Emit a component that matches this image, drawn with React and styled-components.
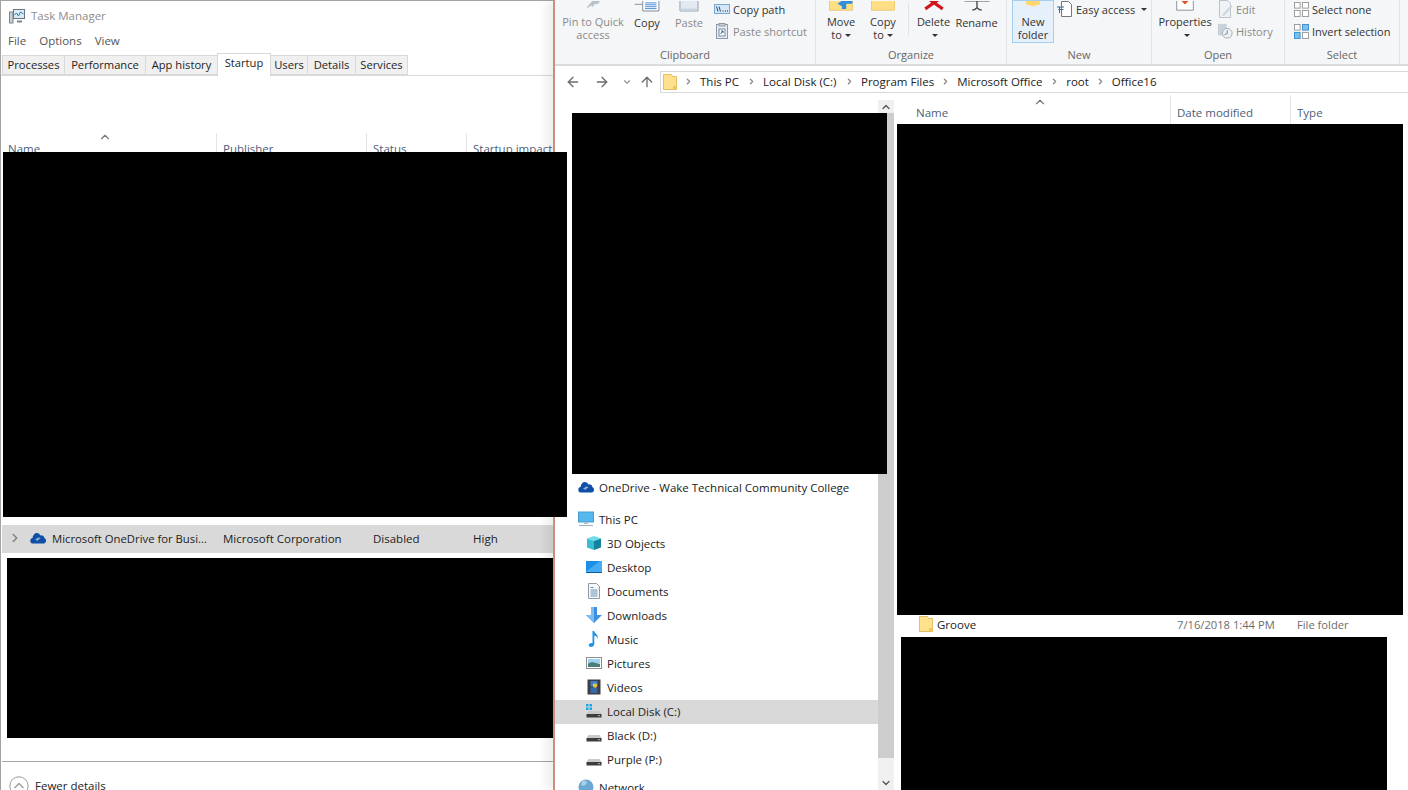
import React from 'react';
import styled, { createGlobalStyle } from 'styled-components';
import { ArrowLeft, ArrowRight, ArrowUp, ChevronDown, ChevronRight, ChevronUp } from 'lucide-react';

const GlobalStyle = createGlobalStyle`
  html, body { margin: 0; padding: 0; height: 100%; overflow: hidden; background: #fff; }
  body { font-family: "Open Sans", "Noto Sans", sans-serif; font-size: 11.5px; color: #1e1e1e; }
  * { box-sizing: border-box; }
`;

const Desktop = styled.div`
  position: relative;
  display: flex;
  width: 1408px;
  height: 790px;
  overflow: hidden;
`;

const Redaction = styled.div`
  position: absolute;
  z-index: 5;
  left: ${(p) => p.$x}px;
  top: ${(p) => p.$y}px;
  width: ${(p) => p.$w}px;
  height: ${(p) => p.$h}px;
  background: #000;
`;

/* task manager */
const TaskWindow = styled.div`
  flex: 0 0 553px;
  display: flex;
  flex-direction: column;
  height: 790px;
  border-top: 1px solid #a3a3a3;
  border-left: 1px solid #a3a3a3;
  background: #fff;
`;

const TitleBar = styled.div`
  flex: 0 0 29px;
  display: flex;
  align-items: center;
  gap: 6px;
  padding-left: 8px;
  color: #8d8d8d;
`;

const MenuBar = styled.div`
  flex: 0 0 23px;
  display: flex;
  align-items: center;
  gap: 13px;
  padding-left: 7px;
  padding-bottom: 3px;
  color: #555;
`;

const TabStrip = styled.div`
  flex: 0 0 23px;
  display: flex;
  align-items: flex-end;
  padding-left: 2px;
  font-size: 11.2px;
  border-bottom: 1px solid #d9d9d9;
`;

const Tab = styled.div`
  flex: 0 0 ${(p) => p.$w}px;
  height: ${(p) => (p.$active ? 23 : 20)}px;
  margin-bottom: ${(p) => (p.$active ? -1 : 0)}px;
  margin-left: -1px;
  display: flex;
  align-items: center;
  justify-content: center;
  padding-bottom: ${(p) => (p.$active ? 5 : 1)}px;
  background: ${(p) => (p.$active ? '#fff' : '#f0f0f0')};
  border: 1px solid #d9d9d9;
  border-bottom: ${(p) => (p.$active ? 'none' : '1px solid #d9d9d9')};
  color: #1e1e1e;
`;

const TaskBody = styled.div`
  flex: 0 0 685px;
  padding-top: 57px;
`;

const TaskHeader = styled.div`
  position: relative;
  display: grid;
  grid-template-columns: 215px 150px 100px 1fr;
  height: 30px;
  color: #4c607a;
`;

const TaskHeaderCell = styled.div`
  padding: 8px 0 0 ${(p) => (p.$first ? 7 : 6)}px;
  border-left: ${(p) => (p.$first ? 'none' : '1px solid #e5e5e5')};
`;

const SortCaret = styled.span`
  position: absolute;
  left: ${(p) => p.$x}px;
  top: ${(p) => p.$y}px;
  color: #777;
  display: flex;
`;

const TaskRow = styled.div`
  display: grid;
  grid-template-columns: 215px 150px 100px 1fr;
  align-items: center;
  height: 28px;
  margin: 362px 0 0 1px;
  padding-bottom: 2px;
  background: #d9d9d9;
`;

const TaskName = styled.div`
  display: flex;
  align-items: center;
  padding-left: 6px;
  color: #222;
  white-space: nowrap;
`;

const TaskNameText = styled.span`
  margin-left: 6px;
  font-size: 11.3px;
`;

const TaskCell = styled.div`
  padding-left: 6px;
  color: #222;
`;

const TaskFooter = styled.div`
  flex: 0 0 60px;
  display: flex;
  align-items: flex-start;
  gap: 6px;
  margin-left: 1px;
  padding: 14px 0 0 7px;
  border-top: 1px solid #a5a5a5;
  color: #222;
`;

const FooterText = styled.span`
  line-height: 20px;
`;

/* explorer */
const ExplorerWindow = styled.div`
  position: relative;
  z-index: 2;
  flex: 1;
  display: flex;
  flex-direction: column;
  height: 790px;
  border-left: 2px solid #cc8f7e;
  background: #fff;
  box-shadow: -7px 0 9px rgba(0, 0, 0, 0.07);
`;

const Ribbon = styled.div`
  flex: 0 0 66px;
  display: flex;
  overflow: hidden;
  font-size: 11px;
  background: #f5f6f7;
  border-bottom: 2px solid #dadbdc;
`;

const RibbonGroup = styled.div`
  flex: 0 0 ${(p) => p.$w}px;
  display: flex;
  flex-direction: column;
  border-right: 1px solid #e2e3e4;
`;

const GroupTools = styled.div`
  flex: 0 0 48px;
  display: flex;
  align-items: flex-start;
  padding-left: ${(p) => p.$pad || 0}px;
`;

const GroupLabel = styled.div`
  text-align: center;
  line-height: 14px;
  color: #666;
`;

const LargeButton = styled.div`
  flex: 0 0 ${(p) => p.$w}px;
  min-width: 0;
  height: 43px;
  margin-left: ${(p) => p.$ml || 0}px;
  display: flex;
  flex-direction: column;
  align-items: center;
  justify-content: flex-end;
  border: 1px solid ${(p) => (p.$active ? '#a4cdee' : 'transparent')};
  background: ${(p) => (p.$active ? '#e6f0fa' : 'transparent')};
  color: ${(p) => (p.$muted ? '#8a8a8a' : '#333')};
`;

const ButtonLabel = styled.div`
  height: 26px;
  margin-bottom: 1px;
  line-height: 13px;
  text-align: center;
  white-space: nowrap;
`;

const Caret = styled.span`
  display: inline-block;
  width: 0;
  height: 0;
  margin-left: 3px;
  vertical-align: 2px;
  border-left: 3px solid transparent;
  border-right: 3px solid transparent;
  border-top: 3px solid #333;
`;

const SmallStack = styled.div`
  display: flex;
  flex-direction: column;
  margin-left: ${(p) => p.$ml || 0}px;
`;

const SmallButton = styled.div`
  display: flex;
  align-items: center;
  gap: 3px;
  height: 22px;
  padding-bottom: 4px;
  white-space: nowrap;
  color: ${(p) => (p.$muted ? '#8a8a8a' : '#333')};
`;

const GroupDivider = styled.div`
  flex: 0 0 1px;
  height: 33px;
  margin: 3px 3px 0 4px;
  background: #e2e3e4;
`;

const AddressRow = styled.div`
  flex: 0 0 27px;
  display: flex;
  align-items: center;
  padding-left: 10px;
  padding-top: 4px;
  color: #6b6b6b;
`;

const NavGlyph = styled.span`
  flex: 0 0 ${(p) => p.$w || 16}px;
  display: flex;
  justify-content: center;
  margin-left: ${(p) => p.$ml || 0}px;
  color: ${(p) => p.$color || '#6b6b6b'};
`;

const AddressBox = styled.div`
  flex: 1;
  height: 22px;
  display: flex;
  align-items: center;
  gap: 7px;
  margin-left: 5px;
  padding: 0 0 0 2px;
  border: 1px solid #d9d9d9;
  border-right: none;
  color: #222;
`;

const Crumb = styled.span`
  flex: 0 0 ${(p) => p.$w}px;
  white-space: nowrap;
`;

const ExplorerMain = styled.div`
  flex: 1;
  display: flex;
  min-height: 0;
`;

const NavPane = styled.div`
  flex: 0 0 323px;
  padding-top: 383px;
`;

const NavRow = styled.div`
  display: flex;
  align-items: center;
  gap: 5px;
  height: 24px;
  margin-top: ${(p) => p.$mt || 0}px;
  padding-left: ${(p) => (p.$child ? 31 : 23)}px;
  padding-bottom: 2px;
  background: ${(p) => (p.$selected ? '#d9d9d9' : 'transparent')};
  color: #222;
  white-space: nowrap;
`;

const Scrollbar = styled.div`
  flex: 0 0 16px;
  display: flex;
  flex-direction: column;
  margin-top: 7px;
  background: #f0f0f0;
`;

const ScrollButton = styled.div`
  flex: 0 0 13px;
  display: flex;
  align-items: center;
  justify-content: center;
  color: #555;
`;

const ScrollThumb = styled.div`
  flex: 0 0 645px;
  background: #cdcdcd;
`;

const ScrollEnd = styled.div`
  flex: 1;
  display: flex;
  align-items: flex-end;
  justify-content: center;
  padding-bottom: 1px;
  color: #555;
`;

const FilePane = styled.div`
  flex: 1;
  padding-left: 1px;
`;

const FileHeader = styled.div`
  position: relative;
  display: grid;
  grid-template-columns: 275px 120px 1fr;
  height: 31px;
  margin-top: 2px;
  color: #4c607a;
`;

const FileHeaderCell = styled.div`
  padding: 10px 0 0 ${(p) => (p.$first ? 21 : 6)}px;
  border-left: ${(p) => (p.$first ? 'none' : '1px solid #e5e5e5')};
`;

const FileRow = styled.div`
  display: grid;
  grid-template-columns: 275px 120px 1fr;
  align-items: center;
  height: 22px;
  margin-top: 488px;
  padding-bottom: 2px;
`;

const FileName = styled.div`
  display: flex;
  align-items: center;
  gap: 3px;
  padding-left: 23px;
  color: #222;
`;

const FileMeta = styled.div`
  padding-left: 7px;
  font-size: 11.2px;
  color: #6d6d6d;
`;

/* drawings */
const OneDriveIcon = ({ size = 16 }) => (
  <svg width={size} height={size} viewBox="0 0 16 16">
    <path fill="#0f4fa8" d="M3 13.5C1.2 13.5.2 12.2.3 10.4c.1-1.3 1-2.2 2.2-2.4.4-3 2.2-5 4.3-5 1.500 0 2.700.7 3.400 2.400 2.200-.4 4 .9 4.300 2.900 1 .2 1.600 1.100 1.500 2.600-.1 1.100-1 2.600-2.200 2.600z" />
    <path fill="#fff" opacity=".55" d="M6.500 8.700c1-1.400 3-1.600 4.200-.3-1.400.2-2.600 1.300-3.300 2.500-.5-.4-1.500-.9-2.400-.9.3-.6.8-1 1.500-1.300z" />
  </svg>
);

const FolderIcon = ({ width = 16, height = 16 }) => (
  <svg width={width} height={height} viewBox="0 0 14 16">
    <path fill="#ffe08c" stroke="#e2bf63" d="M.5.5h8l1 2h4v13H.5z" />
    <path fill="#f2c55c" d="M10 12h3.500v3.500H10z" />
  </svg>
);

const TaskManagerIcon = () => (
  <svg width="16" height="16" viewBox="0 0 16 16">
    <rect x="0.5" y="4" width="3.5" height="11" fill="#c9ced3" stroke="#7d848b" />
    <rect x="4.5" y="1.5" width="11" height="9" fill="#dcebf7" stroke="#67757f" />
    <path d="M5.500 7l2-2 2 3 2-4 3 2" fill="none" stroke="#2a7f9e" />
    <path d="M8 13.500h5" stroke="#7d848b" strokeWidth="2" />
  </svg>
);

const FewerIcon = () => (
  <svg width="20" height="20" viewBox="0 0 20 20">
    <circle cx="10" cy="10" r="9.2" fill="none" stroke="#9a9a9a" />
    <path d="M5.500 12l4.500-4.500 4.500 4.500" fill="none" stroke="#9a9a9a" strokeWidth="1.3" />
  </svg>
);

const PcIcon = () => (
  <svg width="16" height="16" viewBox="0 0 16 16">
    <rect x="0.5" y="1" width="15" height="10" fill="#53b8ee" stroke="#4a9bd0" />
    <path d="M6 11.500h4v1.500H6z" fill="#b5bfc7" />
    <path d="M1 14.500h14" stroke="#a7b3bd" strokeWidth="1.2" />
  </svg>
);

const CubeIcon = () => (
  <svg width="16" height="16" viewBox="0 0 16 16">
    <path fill="#6fdcea" d="M8 1l7 2.500L8 6 1 3.500z" />
    <path fill="#38bcd0" d="M1 3.500L8 6v9l-7-2.500z" />
    <path fill="#12829f" d="M15 3.500L8 6v9l7-2.500z" />
  </svg>
);

const DesktopIcon = () => (
  <svg width="16" height="16" viewBox="0 0 16 16">
    <rect x="0" y="2" width="16" height="12" fill="#1b8fe8" />
    <path d="M0 12.500L14 2h2v12H0z" fill="#45abf2" />
    <path d="M0 13h16v1H0z" fill="#0b5c9c" />
  </svg>
);

const DocumentsIcon = () => (
  <svg width="16" height="16" viewBox="0 0 16 16">
    <path fill="#f7f9fb" stroke="#8d99a5" d="M2.500.5h8l3 3v12h-11z" />
    <path d="M4.500 4.500h3M4.500 7h7M4.500 9h7M4.500 11h7M4.500 13h7" stroke="#5e8fb8" />
  </svg>
);

const DownloadsIcon = () => (
  <svg width="16" height="16" viewBox="0 0 16 16">
    <path fill="#3d8fdf" d="M5 0h6v8h5l-8 8-8-8h5z" />
    <path fill="#7cbcf2" d="M5 0h3v16l-8-8h5z" />
  </svg>
);

const MusicIcon = () => (
  <svg width="16" height="16" viewBox="0 0 16 16">
    <path fill="#1c96e6" d="M6.500 0h1.600c.2 2.400 4.600 3.400 3.600 8-.5-2-1.800-3-3.400-3.400V13c0 1.700-1.800 3-3.600 3C3.300 16 2.500 15 2.800 13.800c.3-1.300 2-2.200 3.700-1.700z" />
  </svg>
);

const PicturesIcon = () => (
  <svg width="16" height="16" viewBox="0 0 16 16">
    <rect x="0.5" y="2.5" width="15" height="11" fill="#fff" stroke="#8e8e8e" />
    <rect x="2" y="4" width="12" height="4.5" fill="#9ed2ee" />
    <path d="M2 8.500l4-1.500 8 2v3H2z" fill="#4d7d78" />
  </svg>
);

const VideosIcon = () => (
  <svg width="16" height="16" viewBox="0 0 16 16">
    <rect x="1.5" y="0.5" width="13" height="15" fill="#3c3f46" />
    <rect x="4.5" y="2" width="7" height="5.5" fill="#3f7fcb" />
    <rect x="4.5" y="8.5" width="7" height="5.5" fill="#3469a8" />
    <circle cx="9" cy="6.5" r="2.2" fill="#e2c53c" />
  </svg>
);

const DriveIcon = ({ system }) => (
  <svg width="16" height="16" viewBox="0 0 16 16">
    {system && (
      <g fill="#19a7e8">
        <rect x="0" y="1" width="2.5" height="2.5" />
        <rect x="3.5" y="1" width="2.5" height="2.5" />
        <rect x="0" y="4.5" width="2.5" height="2.5" />
        <rect x="3.5" y="4.5" width="2.5" height="2.5" />
      </g>
    )}
    <path d="M2.500 8h11l2 3H.5z" fill="#c9c9c9" />
    <rect x="0.5" y="11" width="15" height="3.5" fill="#3d3d3d" />
    <rect x="12" y="12.2" width="2" height="1" fill="#8fd08f" />
  </svg>
);

const GlobeIcon = () => (
  <svg width="16" height="16" viewBox="0 0 16 16">
    <circle cx="8" cy="8" r="7.5" fill="#6aa7d3" />
    <path d="M4 2c3-1 5 0 5 2L6 7 3 6z" fill="#a7cfe8" />
  </svg>
);

const PinIcon = () => (
  <svg width="24" height="16" viewBox="0 0 24 16">
    <path d="M5 7L11 0h9l-2 3-5 1-1 3-2-2-4 3z" fill="#b9c2cc" />
  </svg>
);

const CopyIcon = () => (
  <svg width="28" height="16" viewBox="0 0 28 16">
    <path d="M1 3.500h8" stroke="#8c8c8c" fill="none" />
    <path d="M9.500 0v10.500h17V0" fill="#fff" stroke="#7e8790" />
    <path d="M12 2h12M12 4h12M12 6h12M12 8h12" stroke="#3f87d4" />
  </svg>
);

const PasteIcon = () => (
  <svg width="22" height="16" viewBox="0 0 22 16">
    <path d="M1.500 0v10.500h19V0" fill="#e2e9f3" stroke="#93a0ae" />
    <path d="M2 8h18v2H2z" fill="#c9d3df" />
  </svg>
);

const MoveToIcon = () => (
  <svg width="28" height="16" viewBox="0 0 28 16">
    <rect x="1" y="-1" width="26" height="11.5" fill="#ffdf85" stroke="#e8c668" />
    <path d="M10 3l6-4h11v4h-7v6h-5V6z" fill="#2f8fdf" />
  </svg>
);

const CopyToIcon = () => (
  <svg width="28" height="16" viewBox="0 0 28 16">
    <rect x="1" y="-1" width="26" height="11.5" fill="#ffdf85" stroke="#e8c668" />
  </svg>
);

const DeleteIcon = () => (
  <svg width="28" height="16" viewBox="0 0 28 16">
    <path d="M4 -5L24 9M24 -5L4 9" fill="none" stroke="#d2141c" strokeWidth="3.5" />
  </svg>
);

const RenameIcon = () => (
  <svg width="28" height="16" viewBox="0 0 28 16">
    <path d="M1 .5h26" stroke="#9a9a9a" />
    <path d="M14 0v7M9 9.500c2 0 4-1 5-2.500 1 1.500 3 2.500 5 2.500" fill="none" stroke="#444" strokeWidth="1.4" />
  </svg>
);

const NewFolderIcon = () => (
  <svg width="20" height="16" viewBox="0 0 20 16">
    <path d="M2 0h16v4l-8 2-8-2z" fill="#ffd870" />
  </svg>
);

const PropertiesIcon = () => (
  <svg width="22" height="16" viewBox="0 0 22 16">
    <path d="M1.500 0v10.500h19V0" fill="#fff" stroke="#7e8790" />
    <path d="M7 0h8l-4 4z" fill="#e2532d" />
  </svg>
);

const CopyPathIcon = () => (
  <svg width="16" height="16" viewBox="0 0 16 16">
    <rect x="0.5" y="3.5" width="15" height="9" fill="#d6e7f7" stroke="#7aa7d1" />
    <path d="M2.500 5.500l1.500 5M5 5.500l1.500 5" stroke="#1d4f7f" />
    <path d="M8.500 10h1M11 10h1M13 10h1" stroke="#222" />
  </svg>
);

const PasteShortcutIcon = () => (
  <svg width="16" height="16" viewBox="0 0 16 16">
    <rect x="2.5" y="1.5" width="11" height="14" fill="#e8edf3" stroke="#8e9aa7" />
    <rect x="5" y="0.5" width="6" height="2.5" fill="#c9cfd6" stroke="#8e9aa7" />
    <rect x="5" y="6" width="6" height="7" fill="#fff" stroke="#6f8ba8" />
    <path d="M6.500 11l2.500-3M7 8h2v2" fill="none" stroke="#355f8b" />
  </svg>
);

const EasyAccessIcon = () => (
  <svg width="16" height="18" viewBox="0 0 16 18">
    <path d="M4.500 1.500h7l3 3v12h-10z" fill="#fff" stroke="#707a84" />
    <path d="M0 7h7M1.500 9.500h5M2.500 7v6" stroke="#2d6ca8" fill="none" />
  </svg>
);

const EditIcon = () => (
  <svg width="16" height="18" viewBox="0 0 16 18">
    <path d="M2.500.5h8l3 3v14h-11z" fill="#f0f3f6" stroke="#bac3cc" />
    <path d="M6 14l8-9 1.500 1.500-8 9-2.500.5z" fill="#cbd5df" />
  </svg>
);

const HistoryIcon = () => (
  <svg width="16" height="18" viewBox="0 0 18 18">
    <rect x="1" y="1" width="10" height="13" fill="#c9d2db" />
    <circle cx="11.5" cy="11.5" r="5.5" fill="#eef2f6" stroke="#9aa5b0" />
    <path d="M11.500 8v4l-3 1" fill="none" stroke="#6f7c88" />
  </svg>
);

const SelectIcon = ({ invert }) => (
  <svg width="15" height="15" viewBox="0 0 16 16">
    <rect x="0.5" y="0.5" width="6" height="6" fill="#fff" stroke="#9a9a9a" />
    <rect x="9" y="0.5" width="6.5" height="6" fill={invert ? '#7cc0ee' : '#fff'} stroke={invert ? '#3e8fd0' : '#9a9a9a'} />
    <rect x="0.5" y="9" width="6" height="6.5" fill={invert ? '#7cc0ee' : '#fff'} stroke={invert ? '#3e8fd0' : '#9a9a9a'} />
    <rect x="9" y="9" width="6.5" height="6.5" fill="#fff" stroke="#9a9a9a" />
  </svg>
);

const tabs = [
  ['Processes', 63],
  ['Performance', 82],
  ['App history', 73],
  ['Startup', 54],
  ['Users', 38],
  ['Details', 49],
  ['Services', 53],
];

const crumbs = [
  ['This PC', 40],
  ['Local Disk (C:)', 75],
  ['Program Files', 72],
  ['Microsoft Office', 86],
  ['root', 22],
  ['Office16', 44],
];

const places = [
  { label: '3D Objects', icon: <CubeIcon /> },
  { label: 'Desktop', icon: <DesktopIcon /> },
  { label: 'Documents', icon: <DocumentsIcon /> },
  { label: 'Downloads', icon: <DownloadsIcon /> },
  { label: 'Music', icon: <MusicIcon /> },
  { label: 'Pictures', icon: <PicturesIcon /> },
  { label: 'Videos', icon: <VideosIcon /> },
  { label: 'Local Disk (C:)', icon: <DriveIcon system />, selected: true },
  { label: 'Black (D:)', icon: <DriveIcon /> },
  { label: 'Purple (P:)', icon: <DriveIcon /> },
];

const App = () => {
  return (
    <Desktop>
      <GlobalStyle />

      <TaskWindow>
        <TitleBar>
          <TaskManagerIcon />
          <span>Task Manager</span>
        </TitleBar>
        <MenuBar>
          <span>File</span>
          <span>Options</span>
          <span>View</span>
        </MenuBar>
        <TabStrip>
          {tabs.map(([name, w]) => (
            <Tab key={name} $w={w} $active={name === 'Startup'}>{name}</Tab>
          ))}
        </TabStrip>
        <TaskBody>
          <TaskHeader>
            <SortCaret $x={97} $y={-3}><ChevronUp size={14} /></SortCaret>
            <TaskHeaderCell $first>Name</TaskHeaderCell>
            <TaskHeaderCell>Publisher</TaskHeaderCell>
            <TaskHeaderCell>Status</TaskHeaderCell>
            <TaskHeaderCell>Startup impact</TaskHeaderCell>
          </TaskHeader>
          <TaskRow>
            <TaskName>
              <NavGlyph $w={14} $color="#808080"><ChevronRight size={14} strokeWidth={2.5} /></NavGlyph>
              <NavGlyph $w={16} $ml={8}><OneDriveIcon /></NavGlyph>
              <TaskNameText>Microsoft OneDrive for Busi...</TaskNameText>
            </TaskName>
            <TaskCell>Microsoft Corporation</TaskCell>
            <TaskCell>Disabled</TaskCell>
            <TaskCell>High</TaskCell>
          </TaskRow>
        </TaskBody>
        <TaskFooter>
          <FewerIcon />
          <FooterText>Fewer details</FooterText>
        </TaskFooter>
      </TaskWindow>

      <ExplorerWindow>
        <Ribbon>
          <RibbonGroup $w={261}>
            <GroupTools $pad={7}>
              <LargeButton $w={62} $muted>
                <PinIcon />
                <ButtonLabel>Pin to Quick<br />access</ButtonLabel>
              </LargeButton>
              <LargeButton $w={42} $ml={2}>
                <CopyIcon />
                <ButtonLabel>Copy</ButtonLabel>
              </LargeButton>
              <LargeButton $w={42} $muted>
                <PasteIcon />
                <ButtonLabel>Paste</ButtonLabel>
              </LargeButton>
              <SmallStack $ml={4}>
                <SmallButton><CopyPathIcon />Copy path</SmallButton>
                <SmallButton $muted><PasteShortcutIcon />Paste shortcut</SmallButton>
              </SmallStack>
            </GroupTools>
            <GroupLabel>Clipboard</GroupLabel>
          </RibbonGroup>

          <RibbonGroup $w={191}>
            <GroupTools $pad={4}>
              <LargeButton $w={42}>
                <MoveToIcon />
                <ButtonLabel>Move<br />to<Caret /></ButtonLabel>
              </LargeButton>
              <LargeButton $w={42}>
                <CopyToIcon />
                <ButtonLabel>Copy<br />to<Caret /></ButtonLabel>
              </LargeButton>
              <GroupDivider />
              <LargeButton $w={43}>
                <DeleteIcon />
                <ButtonLabel>Delete<br /><Caret /></ButtonLabel>
              </LargeButton>
              <LargeButton $w={43}>
                <RenameIcon />
                <ButtonLabel>Rename</ButtonLabel>
              </LargeButton>
            </GroupTools>
            <GroupLabel>Organize</GroupLabel>
          </RibbonGroup>

          <RibbonGroup $w={145}>
            <GroupTools $pad={5}>
              <LargeButton $w={42} $active>
                <NewFolderIcon />
                <ButtonLabel>New<br />folder</ButtonLabel>
              </LargeButton>
              <SmallStack $ml={3}>
                <SmallButton><EasyAccessIcon />Easy access<Caret /></SmallButton>
              </SmallStack>
            </GroupTools>
            <GroupLabel>New</GroupLabel>
          </RibbonGroup>

          <RibbonGroup $w={133}>
            <GroupTools $pad={5}>
              <LargeButton $w={56}>
                <PropertiesIcon />
                <ButtonLabel>Properties<br /><Caret /></ButtonLabel>
              </LargeButton>
              <SmallStack $ml={4}>
                <SmallButton $muted><EditIcon />Edit</SmallButton>
                <SmallButton $muted><HistoryIcon />History</SmallButton>
              </SmallStack>
            </GroupTools>
            <GroupLabel>Open</GroupLabel>
          </RibbonGroup>

          <RibbonGroup $w={115}>
            <GroupTools $pad={9}>
              <SmallStack>
                <SmallButton><SelectIcon />Select none</SmallButton>
                <SmallButton><SelectIcon invert />Invert selection</SmallButton>
              </SmallStack>
            </GroupTools>
            <GroupLabel>Select</GroupLabel>
          </RibbonGroup>
        </Ribbon>

        <AddressRow>
          <NavGlyph><ArrowLeft size={16} /></NavGlyph>
          <NavGlyph $ml={13}><ArrowRight size={16} /></NavGlyph>
          <NavGlyph $w={10} $ml={12} $color="#999"><ChevronDown size={10} strokeWidth={3} /></NavGlyph>
          <NavGlyph $ml={7}><ArrowUp size={16} /></NavGlyph>
          <AddressBox>
            <FolderIcon width={14} />
            {crumbs.map(([name, w]) => (
              <React.Fragment key={name}>
                <NavGlyph $w={8} $color="#888"><ChevronRight size={9} strokeWidth={3.5} /></NavGlyph>
                <Crumb $w={w}>{name}</Crumb>
              </React.Fragment>
            ))}
          </AddressBox>
        </AddressRow>

        <ExplorerMain>
          <NavPane>
            <NavRow>
              <OneDriveIcon />
              <span>OneDrive - Wake Technical Community College</span>
            </NavRow>
            <NavRow $mt={8}>
              <PcIcon />
              <span>This PC</span>
            </NavRow>
            {places.map((d) => (
              <NavRow key={d.label} $child $selected={d.selected}>
                {d.icon}
                <span>{d.label}</span>
              </NavRow>
            ))}
            <NavRow $mt={4}>
              <GlobeIcon />
              <span>Network</span>
            </NavRow>
          </NavPane>

          <Scrollbar>
            <ScrollButton><ChevronUp size={12} strokeWidth={2.5} /></ScrollButton>
            <ScrollThumb />
            <ScrollEnd><ChevronDown size={12} strokeWidth={2.5} /></ScrollEnd>
          </Scrollbar>

          <FilePane>
            <FileHeader>
              <SortCaret $x={138} $y={0}><ChevronUp size={14} /></SortCaret>
              <FileHeaderCell $first>Name</FileHeaderCell>
              <FileHeaderCell>Date modified</FileHeaderCell>
              <FileHeaderCell>Type</FileHeaderCell>
            </FileHeader>
            <FileRow>
              <FileName>
                <FolderIcon />
                <span>Groove</span>
              </FileName>
              <FileMeta>7/16/2018 1:44 PM</FileMeta>
              <FileMeta>File folder</FileMeta>
            </FileRow>
          </FilePane>
        </ExplorerMain>
      </ExplorerWindow>

      <Redaction $x={3} $y={152} $w={564} $h={365} />
      <Redaction $x={7} $y={558} $w={546} $h={180} />
      <Redaction $x={572} $y={113} $w={315} $h={361} />
      <Redaction $x={897} $y={124} $w={506} $h={491} />
      <Redaction $x={901} $y={637} $w={486} $h={153} />
    </Desktop>
  );
};

export default App;
